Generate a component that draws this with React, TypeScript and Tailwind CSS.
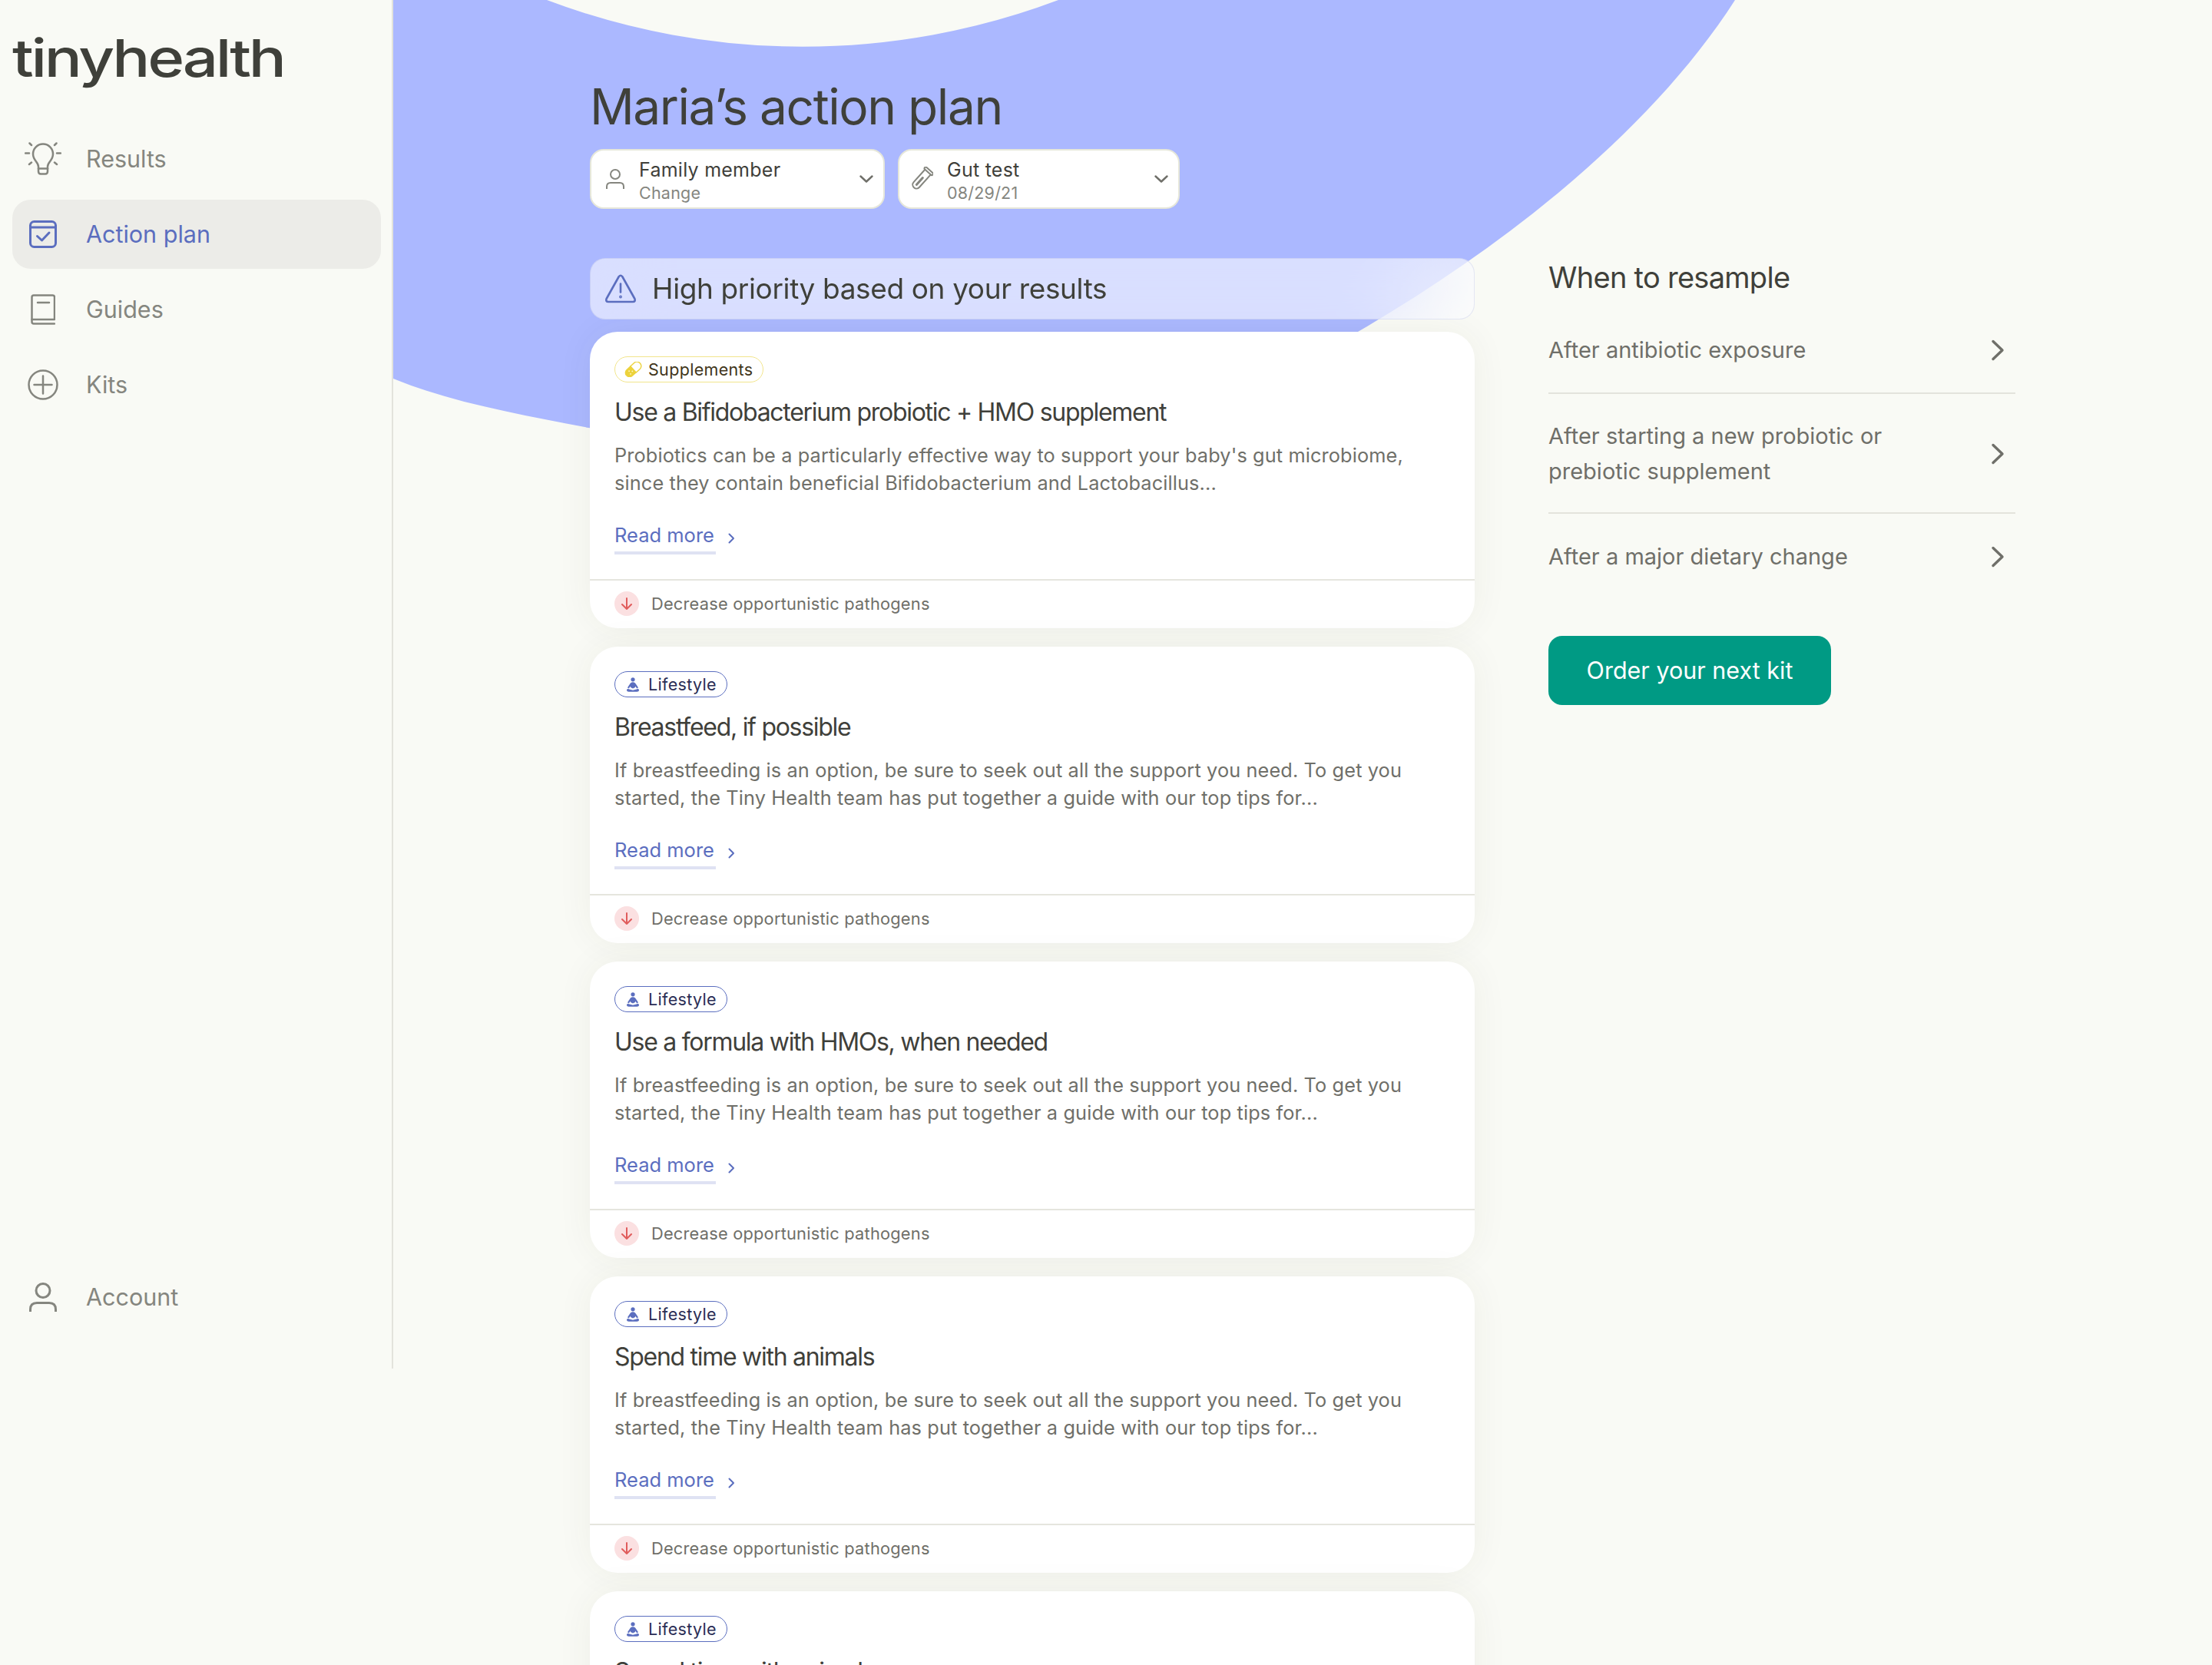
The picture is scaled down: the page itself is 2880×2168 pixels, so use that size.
import React from "react";

const breastfeed =
  "If breastfeeding is an option, be sure to seek out all the support you need. To get you started, the Tiny Health team has put together a guide with our top tips for...";

const cards = [
  {
    tag: "Supplements",
    title: "Use a Bifidobacterium probiotic + HMO supplement",
    body: "Probiotics can be a particularly effective way to support your baby's gut microbiome, since they contain beneficial Bifidobacterium and Lactobacillus...",
  },
  { tag: "Lifestyle", title: "Breastfeed, if possible", body: breastfeed },
  { tag: "Lifestyle", title: "Use a formula with HMOs, when needed", body: breastfeed },
  { tag: "Lifestyle", title: "Spend time with animals", body: breastfeed },
  { tag: "Lifestyle", title: "Spend time with animals", body: breastfeed },
];

function BulbIcon() {
  return (
    <svg width="48" height="44" viewBox="0 0 48 44" fill="none" stroke="#85867f" strokeWidth="2.5" strokeLinecap="round" strokeLinejoin="round">
      <path d="M18 32C18 26 11 24 11 15.5A13 13 0 0 1 37 15.5C37 24 30 26 30 32V38Q30 41.5 27 41.5H21Q18 41.5 18 38Z" />
      <path d="M18 34.5H30" />
      <path d="M1 14.5H6M42 14.5H47M6.5 1.5L9 4M41.5 1.5L39 4M6 29L9 26.5M42 29L39 26.5" />
    </svg>
  );
}

function PlanIcon() {
  return (
    <svg width="36" height="36" viewBox="0 0 36 36" fill="none" stroke="#5b6ebf" strokeWidth="3" strokeLinecap="round" strokeLinejoin="round">
      <rect x="1.5" y="1.5" width="33" height="33" rx="5" />
      <path d="M1.5 9H34.5" />
      <path d="M10.5 20.5L16.5 26L26 16" />
    </svg>
  );
}

function BookIcon() {
  return (
    <svg width="32" height="40" viewBox="0 0 32 40" fill="none" stroke="#85867f" strokeWidth="2.5" strokeLinecap="round" strokeLinejoin="round">
      <path d="M31 33H1.5V4Q1.5 1.5 4 1.5H28.5Q31 1.5 31 4Z" />
      <path d="M1.5 33V36Q1.5 38.5 4 38.5H31" />
      <path d="M9 11H24" />
    </svg>
  );
}

function PlusIcon() {
  return (
    <svg width="40" height="40" viewBox="0 0 40 40" fill="none" stroke="#85867f" strokeWidth="2.5" strokeLinecap="round">
      <circle cx="20" cy="20" r="18.5" />
      <path d="M8.5 20H31.5M20 8.5V31.5" />
    </svg>
  );
}

function UserIcon() {
  return (
    <svg width="36" height="38" viewBox="0 0 36 38" fill="none" stroke="#85867f" strokeWidth="3">
      <circle cx="18" cy="10.5" r="9" />
      <path d="M1.5 38V35Q1.5 26.5 10 26.5H26Q34.5 26.5 34.5 35V38" />
    </svg>
  );
}

function SmallUserIcon() {
  return (
    <svg className="-ml-[2px]" width="24" height="26" viewBox="0 0 24 26" fill="none" stroke="#85867f" strokeWidth="2">
      <circle cx="12" cy="7" r="6" />
      <path d="M1 26V23Q1 18 6 18H18Q23 18 23 23V26" />
    </svg>
  );
}

function VialIcon() {
  return (
    <svg className="-ml-[6px]" width="30" height="32" viewBox="0 0 30 32" fill="none" stroke="#85867f" strokeWidth="2" strokeLinecap="round">
      <g transform="rotate(42 15 16)">
        <rect x="8" y="0.5" width="14" height="3.5" rx="1.75" />
        <path d="M10 4V26A5 5 0 0 0 20 26V4" />
        <path d="M15 14V26" strokeWidth="3" />
      </g>
    </svg>
  );
}

function ChevronDown() {
  return (
    <svg width="18" height="10" viewBox="0 0 18 10" fill="none" stroke="#6f6f69" strokeWidth="2.4" strokeLinecap="round" strokeLinejoin="round">
      <path d="M1.5 1.5L9 8.5L16.5 1.5" />
    </svg>
  );
}

function AlertIcon() {
  return (
    <svg width="40" height="38" viewBox="0 0 40 38" fill="none" stroke="#5b6ebf" strokeWidth="2.6" strokeLinecap="round" strokeLinejoin="round">
      <path d="M17.8 3Q20 0.5 22.2 3L38.4 32Q39.6 36 36 36H4Q0.4 36 1.6 32Z" />
      <path d="M20 12.5V23.5" />
      <circle cx="20" cy="29.5" r="0.6" fill="#5b6ebf" />
    </svg>
  );
}

function PillIcon() {
  return (
    <svg width="23" height="20" viewBox="0 0 23 20" fill="none">
      <g transform="rotate(-42 11.5 10)">
        <path d="M11.5 4.5H18A5.5 5.5 0 0 1 18 15.5H11.5Z" fill="none" stroke="#ecd23c" strokeWidth="1.4" />
        <path d="M11.5 4H5A6 6 0 0 0 5 16H11.5Z" fill="#ecd23c" />
        <circle cx="6" cy="8" r="0.9" fill="#fff7c9" />
        <circle cx="9" cy="11" r="0.9" fill="#fff7c9" />
        <circle cx="5" cy="12" r="0.9" fill="#fff7c9" />
      </g>
    </svg>
  );
}

function MeditateIcon() {
  return (
    <svg width="18" height="19" viewBox="0 0 18 19" fill="#5b6ebf">
      <circle cx="9" cy="2.8" r="2.6" />
      <path d="M9 6.2C6.8 6.2 5.8 7.2 5.2 8.6L2 13.2L3.6 14.4L6 11.4V13L9 14.4L12 13V11.4L14.4 14.4L16 13.2L12.8 8.6C12.2 7.2 11.2 6.2 9 6.2Z" />
      <path d="M1 16.6C1 15.4 2.2 14.8 3.4 15.2L9 16.8L14.6 15.2C15.8 14.8 17 15.4 17 16.6C17 18 15.8 18.8 14.4 18.8H3.6C2.2 18.8 1 18 1 16.6Z" />
    </svg>
  );
}

function RightChevron() {
  return (
    <svg width="18" height="28" viewBox="0 0 18 28" fill="none" stroke="#6f6f69" strokeWidth="3.4" strokeLinecap="round" strokeLinejoin="round">
      <path d="M3 2.5L15 14L3 25.5" />
    </svg>
  );
}

function NavItem({ icon, label, active }: { icon: React.ReactNode; label: string; active?: boolean }) {
  return (
    <div
      className={
        active
          ? "ml-4 flex h-[90px] w-[480px] items-center rounded-[24px] bg-[#ecece8] text-[#5b6ebf]"
          : "ml-4 flex h-[90px] w-[480px] items-center rounded-[24px] text-[#85867f]"
      }
    >
      <div className="flex w-20 shrink-0 items-center justify-center">{icon}</div>
      <span className="ml-4 text-[30.5px] leading-[40px]">{label}</span>
    </div>
  );
}

function Picker({ icon, title, sub, width }: { icon: React.ReactNode; title: string; sub: string; width: string }) {
  return (
    <div className={`flex h-[78px] items-center rounded-[18px] border-2 border-[#e6e7da] bg-white pl-[17px] pr-[13px] ${width}`}>
      <div className="flex w-[30px] shrink-0 justify-center">{icon}</div>
      <div className="ml-[15px] flex-1 pt-[6px]">
        <div className="text-[25px] leading-[30px] tracking-[0.01em] text-[#3f403a]">{title}</div>
        <div className="text-[21.5px] leading-[30px] tracking-[0.01em] text-[#85867f]">{sub}</div>
      </div>
      <ChevronDown />
    </div>
  );
}

function Card({ tag, title, body }: { tag: string; title: string; body: string }) {
  const isSupp = tag === "Supplements";
  return (
    <div className="h-[386px] w-[1152px] shrink-0 overflow-hidden rounded-[36px] bg-white shadow-[0_0_48px_rgba(70,70,40,0.06)]">
      <div className="h-[322px] px-8 pt-8">
        <div
          className={
            isSupp
              ? "flex h-[34px] w-fit items-center rounded-full border-[1.5px] border-[#f2e58c] pl-[12px] pr-[13px] text-[#40351a]"
              : "flex h-[34px] w-fit items-center rounded-full border-[1.5px] border-[#5b6ebf] pl-[14px] pr-[13px] text-[#2a2d55]"
          }
        >
          {isSupp ? <PillIcon /> : <MeditateIcon />}
          <span className={isSupp ? "ml-[8px] text-[21.5px] tracking-[0.015em]" : "ml-[11px] text-[21.5px] tracking-[0.015em]"}>{tag}</span>
        </div>
        <h3 className="mt-[19px] text-[32px] leading-[40px] tracking-[-0.04em] text-[#3f403a]">{title}</h3>
        <p className="mt-[18px] w-[1060px] text-[25.3px] leading-[36px] tracking-[0.005em] text-[#6f6f69]">{body}</p>
        <div className="mt-[32px] flex items-center">
          <span className="border-b-4 border-[#dfe2f3] pb-[3px] pr-[2px] text-[25.5px] leading-[36px] text-[#5b6ebf]">Read more</span>
          <svg className="ml-4" width="9" height="14" viewBox="0 0 9 14" fill="none" stroke="#5b6ebf" strokeWidth="2" strokeLinecap="round" strokeLinejoin="round">
            <path d="M1.5 1.5L7 7L1.5 12.5" />
          </svg>
        </div>
      </div>
      <div className="flex h-[64px] items-center border-t-2 border-[#e5e5de] px-8 pb-[2px]">
        <div className="flex h-8 w-8 items-center justify-center rounded-full bg-[#fbe0e1]">
          <svg width="14" height="16" viewBox="0 0 14 16" fill="none" stroke="#e05c5c" strokeWidth="2" strokeLinecap="round" strokeLinejoin="round">
            <path d="M7 1V15M1 9L7 15L13 9" />
          </svg>
        </div>
        <span className="ml-4 text-[21.8px] tracking-[0.01em] text-[#6f6f69]">Decrease opportunistic pathogens</span>
      </div>
    </div>
  );
}

function ResampleRow({ text, className }: { text: string; className: string }) {
  return (
    <div className={`flex items-center justify-between pr-[14px] ${className}`}>
      <span className="max-w-[480px] text-[29px] leading-[46px] text-[#6f6f69]">{text}</span>
      <RightChevron />
    </div>
  );
}

export default function App() {
  return (
    <div className="flex h-[2168px] w-[2880px] overflow-hidden bg-[#f9faf5] font-[family-name:Inter,sans-serif]">
      <aside className="flex h-[1782px] w-[512px] shrink-0 flex-col border-r-2 border-[#e3e3dc]">
        <div className="h-[162px] pl-4 pt-[35px]">
          <div className="origin-left scale-x-[1.2] text-[68px] font-medium leading-[80px] tracking-[-0.04em] text-[#3f403a]">tinyhealth</div>
        </div>
        <div className="flex flex-col gap-2">
          <NavItem icon={<BulbIcon />} label="Results" />
          <NavItem icon={<PlanIcon />} label="Action plan" active />
          <NavItem icon={<BookIcon />} label="Guides" />
          <NavItem icon={<PlusIcon />} label="Kits" />
        </div>
        <div className="mb-[48px] mt-auto">
          <NavItem icon={<UserIcon />} label="Account" />
        </div>
      </aside>

      <main className="relative flex flex-1 pl-[256px]">
        {/* blue backdrop shape, coordinates are relative to the main pane */}
        <svg className="absolute left-0 top-0" width="2368" height="700" viewBox="512 0 2368 700">
          <path
            d="M512 0H712A943 943 0 0 0 1378 0H2259C2150 170 1960 320 1768 432L1400 640L766 557C680 540 590 525 512 493Z"
            fill="#abb8ff"
          />
        </svg>

        <div className="relative flex w-[1152px] shrink-0 flex-col pt-[101px]">
          <h1 className="text-[64px] font-normal leading-[76px] tracking-[-0.0225em] text-[#3f403a]">Maria’s action plan</h1>
          <div className="mt-[17px] flex gap-[17px]">
            <Picker icon={<SmallUserIcon />} title="Family member" sub="Change" width="w-[384px]" />
            <Picker icon={<VialIcon />} title="Gut test" sub="08/29/21" width="w-[367px]" />
          </div>
          <div className="mt-[64px] flex h-[80px] shrink-0 items-center rounded-[20px] border border-[#8a96d0]/20 bg-white/55 pl-[19px] backdrop-blur-[48px]">
            <AlertIcon />
            <span className="ml-[21px] text-[37px] tracking-[-0.01em] text-[#3f403a]">High priority based on your results</span>
          </div>
          <div className="mt-4 flex flex-col gap-6">
            {cards.map((c, i) => (
              <Card key={i} tag={c.tag} title={c.title} body={c.body} />
            ))}
          </div>
        </div>

        <div className="relative ml-24 w-[608px] pt-[337px]">
          <h2 className="text-[38px] font-normal leading-[48px] tracking-[-0.019em] text-[#3f403a]">When to resample</h2>
          <div className="mt-4">
            <ResampleRow text="After antibiotic exposure" className="border-b-2 border-[#e3e3dc] py-8" />
            <ResampleRow text="After starting a new probiotic or prebiotic supplement" className="border-b-2 border-[#e3e3dc] pb-[30px] pt-8" />
            <ResampleRow text="After a major dietary change" className="pb-8 pt-[33px]" />
          </div>
          <button className="mt-[48px] flex h-[90px] w-[368px] items-center justify-center rounded-[18px] bg-[#009a84] text-[30.5px] text-white">Order your next kit</button>
        </div>
      </main>
    </div>
  );
}
